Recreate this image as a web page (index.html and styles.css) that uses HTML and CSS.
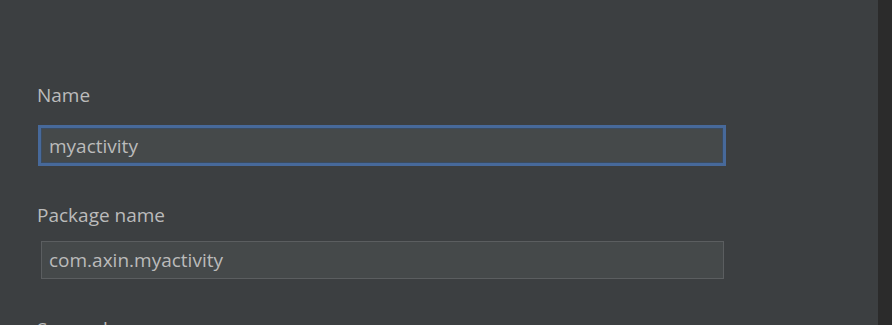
FILE: index.html
```html
<!DOCTYPE html>
<html>
<head>
<meta charset="utf-8">
<link rel="stylesheet" href="styles.css">
</head>
<body>
<div class="window">
  <div class="form">
    <div class="label">Name</div>
    <div class="input focused">myactivity</div>
    <div class="label spaced">Package name</div>
    <div class="input plain">com.axin.myactivity</div>
    <div class="label spaced2">Source language</div>
  </div>
  <div class="edge"></div>
</div>
</body>
</html>
```

FILE: styles.css
```css
html, body {
  margin: 0;
  padding: 0;
  height: 100%;
  overflow: hidden;
  background: #3c3f41;
}
.window {
  display: flex;
  height: 325px;
}
.form {
  flex: 1;
  padding: 84px 0 0 37px;
  font-family: "Open Sans", "Noto Sans", sans-serif;
  color: #bbbbbb;
}
.edge {
  width: 14px;
  background: #2b2b2b;
}
.label {
  font-size: 19px;
  line-height: 22px;
  height: 22px;
}
.spaced {
  margin-top: 38px;
}
.spaced2 {
  margin-top: 39px;
}
.input {
  box-sizing: border-box;
  background: #45494a;
  font-size: 19px;
  color: #bbbbbb;
  display: flex;
  align-items: center;
}
.focused {
  margin: 19px 0 0 1px;
  width: 688px;
  height: 41px;
  border: 3px solid #47699a;
  box-shadow: inset 0 0 0 1px #3b4c60;
  padding-left: 8px;
}
.plain {
  margin: 15px 0 0 4px;
  width: 683px;
  height: 38px;
  border: 1px solid #5b5e60;
  padding-left: 7px;
}
```
